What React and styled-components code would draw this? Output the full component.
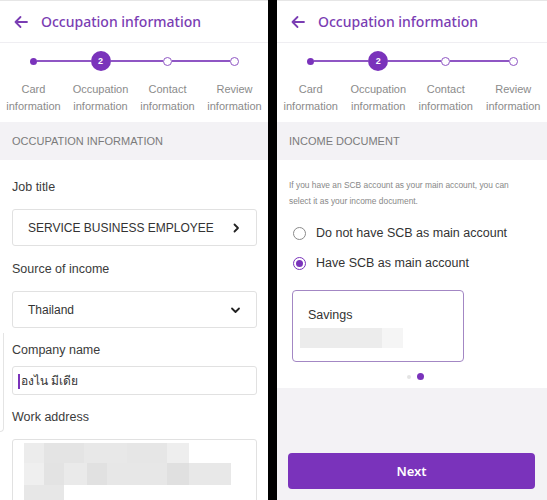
import React from "react";
import styled, { createGlobalStyle } from "styled-components";

const purple = "#7a33bb";

const Global = createGlobalStyle`
  html, body { margin: 0; padding: 0; background: #000; }
  body { font-family: "Liberation Sans", Arial, sans-serif; }
  * { box-sizing: border-box; }
`;

const Page = styled.div`
  display: flex;
  gap: 9px;
  width: 547px;
  height: 500px;
  background: #000;
  overflow: hidden;
`;

const Screen = styled.div`
  position: relative;
  width: ${(p) => p.$w}px;
  height: 500px;
  display: flex;
  flex-direction: column;
  background: ${(p) => (p.$grey ? "#f3f2f5" : "#fff")};
  overflow: hidden;
`;

const Header = styled.div`
  height: 43px;
  flex-shrink: 0;
  display: flex;
  align-items: center;
  gap: 13px;
  padding-left: 14px;
  background: #fff;
  border-bottom: 1px solid #efeef2;
  border-top: 1px solid #e6e6e6;
`;

const Title = styled.div`
  font-family: "Noto Sans", Inter, sans-serif;
  font-size: 14px;
  font-weight: 500;
  color: #7a3db3;
`;

const Stepper = styled.div`
  flex-shrink: 0;
  height: 79px;
  display: grid;
  grid-template-columns: repeat(4, 1fr);
  padding-top: 8px;
  background: #fff;
`;

const Step = styled.div`
  display: flex;
  flex-direction: column;
  align-items: center;
`;

const Track = styled.div`
  width: 100%;
  height: 20px;
  display: flex;
  align-items: center;
`;

const Line = styled.div`
  flex: 1;
  height: 2px;
  background: ${(p) => (p.$off ? "transparent" : "#8f56c4")};
`;

const Dot = styled.div`
  flex-shrink: 0;
  width: ${(p) => (p.$kind === "current" ? 20 : p.$kind === "done" ? 7 : 9)}px;
  height: ${(p) => (p.$kind === "current" ? 20 : p.$kind === "done" ? 7 : 9)}px;
  border-radius: 50%;
  background: ${(p) => (p.$kind === "todo" ? "#fff" : purple)};
  border: ${(p) => (p.$kind === "todo" ? "1.5px solid #8f56c4" : "none")};
  display: flex;
  align-items: center;
  justify-content: center;
  color: #fff;
  font-size: 9px;
  font-weight: 700;
`;

const StepLabel = styled.div`
  margin-top: 10px;
  font-size: 11px;
  line-height: 17px;
  color: #8b8b8b;
  text-align: center;
`;

const Section = styled.div`
  flex-shrink: 0;
  height: 38px;
  display: flex;
  align-items: center;
  padding-left: 12px;
  background: #f3f2f5;
  font-size: 11px;
  color: #7b7b7b;
  text-transform: uppercase;
`;

const Body = styled.div`
  display: flex;
  flex-direction: column;
  padding: 19px 11px 0 12px;
  background: #fff;
`;

const Label = styled.div`
  font-size: 12.5px;
  line-height: 16px;
  color: #3b3b3b;
  margin-top: ${(p) => p.$mt || 0}px;
`;

const Field = styled.div`
  margin-top: ${(p) => p.$mt || 14}px;
  height: ${(p) => p.$h}px;
  flex-shrink: 0;
  display: flex;
  align-items: center;
  justify-content: space-between;
  padding: 0 15px;
  border: 1px solid #e1e1e1;
  border-radius: 3px;
  font-size: 12px;
  color: #333;
`;

const Cursor = styled.span`
  display: inline-block;
  width: 1.5px;
  height: 15px;
  margin-left: -10px;
  margin-right: 1px;
  background: #7a33bb;
  vertical-align: middle;
`;

const ThaiText = styled.span`
  font-family: "Noto Sans", "Liberation Sans", sans-serif;
  font-size: 12px;
  color: #333;
`;

const Address = styled.div`
  margin-top: 14px;
  height: 80px;
  flex-shrink: 0;
  border: 1px solid #e1e1e1;
  border-radius: 3px;
  padding: 3px 0 0 11px;
  display: flex;
  flex-direction: column;
`;

const BlurRow = styled.div`
  display: flex;
  height: ${(p) => p.$h}px;
`;

const Blur = styled.div`
  width: ${(p) => p.$w}px;
  background: ${(p) => p.$c};
`;

const Ghost = styled.div`
  position: absolute;
  left: -2px;
  top: 333px;
  width: 6px;
  height: 99px;
  border-right: 1px solid #e4e4e4;
  border-bottom: 1px solid #e4e4e4;
  border-bottom-right-radius: 4px;
`;

const WhitePanel = styled.div`
  background: #fff;
  flex-shrink: 0;
`;

const Desc = styled.div`
  font-size: 8.4px;
  line-height: 16px;
  color: #888;
  padding: 17px 12px 0 12px;
`;

const Radios = styled.div`
  display: flex;
  flex-direction: column;
  gap: 16px;
  padding: 17px 0 0 16px;
`;

const RadioRow = styled.div`
  display: flex;
  align-items: center;
  gap: 10px;
  font-size: 12.5px;
  color: #333;
`;

const Radio = styled.div`
  width: 13px;
  height: 13px;
  border-radius: 50%;
  border: 1.5px solid ${(p) => (p.$on ? purple : "#8a8a8a")};
  display: flex;
  align-items: center;
  justify-content: center;
  &::after {
    content: "";
    width: 7px;
    height: 7px;
    border-radius: 50%;
    background: ${(p) => (p.$on ? purple : "transparent")};
  }
`;

const Card = styled.div`
  margin: 20px 0 0 15px;
  width: 172px;
  height: 72px;
  border: 1px solid #a387c4;
  border-radius: 4px;
  padding: 17px 0 0 7px;
  display: flex;
  flex-direction: column;
`;

const CardTitle = styled.div`
  font-size: 12.5px;
  color: #333;
  padding-left: 8px;
`;

const CardBlur = styled.div`
  margin-top: 6px;
  display: flex;
  height: 20px;
`;

const Dots = styled.div`
  display: flex;
  justify-content: center;
  align-items: center;
  gap: 6px;
  padding: 11px 0 8px 6px;
`;

const PageDot = styled.div`
  width: ${(p) => (p.$on ? 7 : 4)}px;
  height: ${(p) => (p.$on ? 7 : 4)}px;
  border-radius: 50%;
  background: ${(p) => (p.$on ? purple : "#e4e4e4")};
`;

const Footer = styled.div`
  flex: 1;
  display: flex;
  flex-direction: column;
  justify-content: flex-end;
  padding: 0 12px 11px 11px;
  background: #f3f2f5;
`;

const Button = styled.button`
  height: 36px;
  border: none;
  border-radius: 4px;
  background: ${purple};
  color: #fff;
  font-family: "Noto Sans", sans-serif;
  font-size: 13px;
  font-weight: 600;
`;

const BackArrow = () => (
  <svg width="14" height="14" viewBox="0 0 14 14" fill="none" stroke="#7a3db3" strokeWidth="1.8" strokeLinecap="round" strokeLinejoin="round">
    <path d="M13 7H1.5M6.5 2L1.5 7l5 5" />
  </svg>
);

const ChevronRight = () => (
  <svg width="10" height="10" viewBox="0 0 10 10" fill="none" stroke="#222" strokeWidth="1.8" strokeLinecap="round" strokeLinejoin="round">
    <path d="M3.5 1.5L7 5l-3.5 3.5" />
  </svg>
);

const ChevronDown = () => (
  <svg width="11" height="10" viewBox="0 0 11 10" fill="none" stroke="#222" strokeWidth="1.8" strokeLinecap="round" strokeLinejoin="round">
    <path d="M2 3.5L5.5 7L9 3.5" />
  </svg>
);

const steps = [
  ["Card", "done"],
  ["Occupation", "current"],
  ["Contact", "todo"],
  ["Review", "todo"],
];

const StepBar = () => (
  <Stepper>
    {steps.map(([name, kind], i) => (
      <Step key={name}>
        <Track>
          <Line $off={i === 0} />
          <Dot $kind={kind}>{kind === "current" ? "2" : null}</Dot>
          <Line $off={i === steps.length - 1} />
        </Track>
        <StepLabel>
          {name}
          <br />
          information
        </StepLabel>
      </Step>
    ))}
  </Stepper>
);

// pixelated (blurred-out) address
const addressRows = [
  [20, [[20, "#ececec"], [40, "#e4e4e4"], [43, "#e8e8e8"], [40, "#e6e6e6"], [22, "#eeeeee"]]],
  [22, [[20, "#efefef"], [20, "#e3e3e3"], [23, "#eaeaea"], [20, "#e1e1e1"], [60, "#e7e7e7"], [22, "#e0e0e0"], [42, "#e8e8e8"]]],
  [20, [[40, "#e7e7e7"]]],
];

const ScreenHeader = () => (
  <Header>
    <BackArrow />
    <Title>Occupation information</Title>
  </Header>
);

export default function App() {
  return (
    <>
      <Global />
      <Page>
        <Screen $w={268}>
          <ScreenHeader />
          <StepBar />
          <Section>Occupation information</Section>
          <Body>
            <Label>Job title</Label>
            <Field $h={37}>
              <span>SERVICE BUSINESS EMPLOYEE</span>
              <ChevronRight />
            </Field>
            <Label $mt={15}>Source of income</Label>
            <Field $h={37}>
              <span>Thailand</span>
              <ChevronDown />
            </Field>
            <Label $mt={14}>Company name</Label>
            <Field $h={29} $mt={8}>
              <ThaiText>
                <Cursor />
                องไน มีเดีย
              </ThaiText>
            </Field>
            <Label $mt={14}>Work address</Label>
            <Address>
              {addressRows.map(([h, blocks], r) => (
                <BlurRow key={r} $h={h}>
                  {blocks.map(([w, c], k) => (
                    <Blur key={k} $w={w} $c={c} />
                  ))}
                </BlurRow>
              ))}
            </Address>
          </Body>
          <Ghost />
        </Screen>
        <Screen $w={270} $grey>
          <ScreenHeader />
          <StepBar />
          <Section>Income document</Section>
          <WhitePanel>
            <Desc>
              If you have an SCB account as your main account, you can
              <br />
              select it as your income document.
            </Desc>
            <Radios>
              <RadioRow>
                <Radio />
                Do not have SCB as main account
              </RadioRow>
              <RadioRow>
                <Radio $on />
                Have SCB as main account
              </RadioRow>
            </Radios>
            <Card>
              <CardTitle>Savings</CardTitle>
              <CardBlur>
                <Blur $w={82} $c="#ececec" />
                <Blur $w={21} $c="#f5f5f5" />
              </CardBlur>
            </Card>
            <Dots>
              <PageDot />
              <PageDot $on />
            </Dots>
          </WhitePanel>
          <Footer>
            <Button>Next</Button>
          </Footer>
        </Screen>
      </Page>
    </>
  );
}
